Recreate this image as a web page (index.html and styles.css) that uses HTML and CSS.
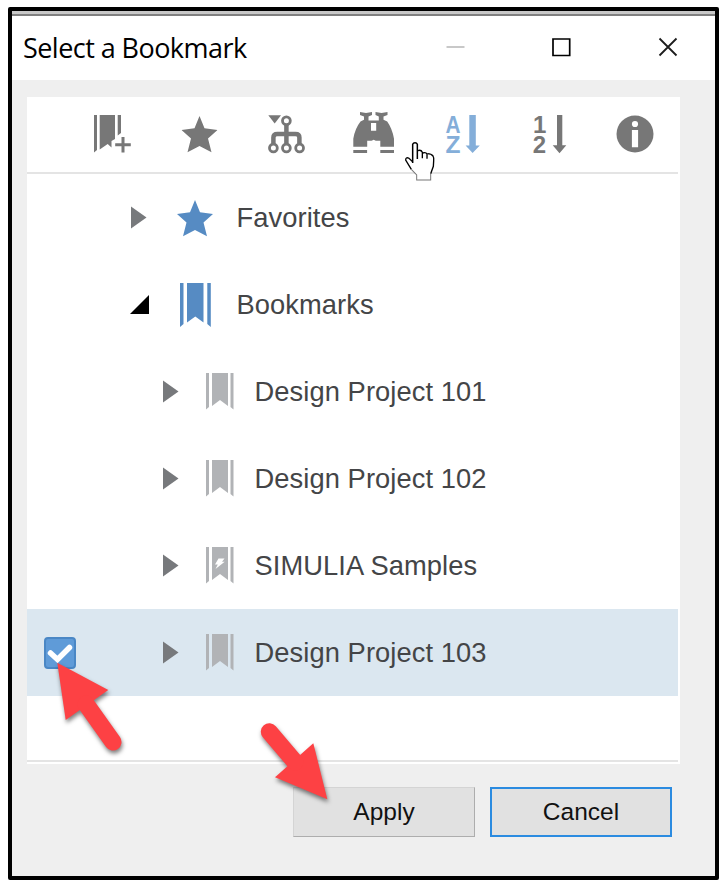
FILE: index.html
```
<!DOCTYPE html>
<html lang="en">
<head>
    <meta charset="UTF-8">
    <meta name="viewport" content="width=device-width, initial-scale=1.0">
    <title>Select a Bookmark</title>
    <link rel="stylesheet" href="styles.css">
</head>
<body>
    <svg class="symbols" width="0" height="0">
        <symbol id="ribbon" viewBox="0 0 28 37">
            <path d="M0 0h3v34L0 36.5zM6 0h16v33l-8-6-8 6zM24.5 0h3v36.5l-3-2.5z"/>
        </symbol>
        <symbol id="star" viewBox="0 0 36 37">
            <path d="M18 0l5 12.2 13 1.8-9.5 8.6L30 36.3l-12-6.4-12 6.4 3.5-13.7L0 14l13-1.8z"/>
        </symbol>
        <symbol id="arrow-right" viewBox="0 0 16 23">
            <path d="M0 .5l15.5 11L0 22.5z"/>
        </symbol>
    </svg>

    <div class="window">
        <header class="title-bar">
            <h1 class="title">Select a Bookmark</h1>
            <div class="window-controls">
                <svg width="20" height="20" viewBox="0 0 20 20"><path d="M.5 10h18" stroke="#c8c8c8" stroke-width="2"/></svg>
                <svg width="20" height="20" viewBox="0 0 20 20"><path d="M1 2h16.700v16.500H1z" fill="none" stroke="#000" stroke-width="1.700"/></svg>
                <svg width="20" height="20" viewBox="0 0 20 20"><path d="M1.500 1.500l17 17M18.500 1.500l-17 17" stroke="#1c1c1c" stroke-width="1.800"/></svg>
            </div>
        </header>

        <main class="content">
            <div class="panel">
                <div class="toolbar">
                    <button class="tool" aria-label="Add bookmark">
                        <svg viewBox="0 0 45 45">
                            <path d="M5 3h3v35l-3 2.500zM10.700 3H26v24l-3.500 2v6.500L18.700 32l-8 5.500zM28.700 3H32v18l-3.300 2.500zM32.500 25h3v6.200h6.300v3h-6.300v6.300h-3v-6.300h-6.300v-3h6.300z"/>
                        </svg>
                    </button>
                    <button class="tool" aria-label="Favorites">
                        <svg viewBox="0 0 45 45"><use href="#star" x="5.5" y="4" width="36" height="37"/></svg>
                    </button>
                    <button class="tool" aria-label="Tree">
                        <svg viewBox="0 0 45 45">
                            <path d="M5.300 3.200H18l-6.300 8.200z"/>
                            <g fill="none" stroke="currentColor">
                                <path d="M23.400 12.500v18.700M10.400 31.500v-6q0-3.600 4-3.600h18q4 0 4 3.600v6" stroke-width="4.500"/>
                                <g stroke-width="2.800">
                                    <circle cx="23.400" cy="8.700" r="3.900"/>
                                    <circle cx="10.400" cy="35.900" r="3.900"/>
                                    <circle cx="23.400" cy="35.900" r="3.900"/>
                                    <circle cx="36.600" cy="35.900" r="3.900"/>
                                </g>
                            </g>
                        </svg>
                    </button>
                    <button class="tool" aria-label="Find">
                        <svg viewBox="0 0 45 45">
                            <path fill-rule="evenodd" d="M10 0l6 1 6-1v3l-3.500 1.500V8.500h10.300V4.500L25.500 3V0l6 1 6-1v3l-4 1.500v3.300l3.700 1.700q5 7 6.800 17.200v8H30.300v-6h-4.500l-2.100-1-2.200 1h-4.300v6H3.300v-8Q5 16.500 10.500 9.500L14 7.800V4.500L10 3zM21 11v7.700h5.200V11zM3.300 38h13.800v3H3.300zM30.300 38H44v3H30.300z"/>
                        </svg>
                    </button>
                    <button class="tool tool-active" aria-label="Sort by name">
                        <svg viewBox="0 0 45 45">
                            <text x="8.500" y="20.500" textLength="15" lengthAdjust="spacingAndGlyphs">A</text>
                            <text x="8.500" y="41" textLength="15" lengthAdjust="spacingAndGlyphs">Z</text>
                            <path d="M32.300 3h6.500v30.500h4L35.600 41l-7-7.500h3.700z"/>
                        </svg>
                    </button>
                    <button class="tool" aria-label="Sort by number">
                        <svg viewBox="0 0 45 45">
                            <text x="9" y="20.500">1</text>
                            <text x="8.700" y="41">2</text>
                            <path d="M33 3h5.300v30.300h4l-6.800 8-6.800-8H33z"/>
                        </svg>
                    </button>
                    <button class="tool" aria-label="Information">
                        <svg viewBox="0 0 45 45">
                            <circle cx="24" cy="22" r="18.500"/>
                            <path d="M20.900 18h6.200v17.300h-6.200z" fill="#fff"/>
                            <circle cx="24" cy="12" r="3.100" fill="#fff"/>
                        </svg>
                    </button>
                </div>

                <ul class="tree">
                    <li class="row">
                        <svg class="toggle"><use href="#arrow-right"/></svg>
                        <svg class="icon icon-star"><use href="#star"/></svg>
                        <span>Favorites</span>
                    </li>
                    <li class="row">
                        <svg class="toggle toggle-open" viewBox="0 0 19 19"><path d="M0 19L19 0v19z"/></svg>
                        <svg class="icon icon-bookmarks" viewBox="0 0 31 44">
                            <path d="M0 0h3.500v41L0 44zM7 0h16.500v39.500l-8.200-6-8.300 6zM27.300 0h3.500v44l-3.500-3z"/>
                        </svg>
                        <span>Bookmarks</span>
                    </li>
                    <li class="row child">
                        <svg class="toggle"><use href="#arrow-right"/></svg>
                        <svg class="icon"><use href="#ribbon"/></svg>
                        <span>Design Project 101</span>
                    </li>
                    <li class="row child">
                        <svg class="toggle"><use href="#arrow-right"/></svg>
                        <svg class="icon"><use href="#ribbon"/></svg>
                        <span>Design Project 102</span>
                    </li>
                    <li class="row child">
                        <svg class="toggle"><use href="#arrow-right"/></svg>
                        <svg class="icon" viewBox="0 0 28 37">
                            <use href="#ribbon"/>
                            <path d="M12.500 11.500h6l-2.500 3.200h2.700L9.500 22l2.300-4.400H9z" fill="#fff"/>
                        </svg>
                        <span>SIMULIA Samples</span>
                    </li>
                    <li class="row child selected">
                        <span class="checkbox" role="checkbox" aria-checked="true">
                            <svg width="28" height="28" viewBox="0 0 28 28"><path d="M4.500 14l7 6.500L23.500 8.500" fill="none" stroke="#fff" stroke-width="5.500" stroke-linecap="round"/></svg>
                        </span>
                        <svg class="toggle"><use href="#arrow-right"/></svg>
                        <svg class="icon"><use href="#ribbon"/></svg>
                        <span>Design Project 103</span>
                    </li>
                </ul>
            </div>

            <div class="actions">
                <button class="btn">Apply</button>
                <button class="btn btn-focus">Cancel</button>
            </div>
        </main>
    </div>

    <!-- mouse pointer -->
    <svg class="pointer" viewBox="0 110 110 140">
        <path d="M38 184V132q2-5 7-5t7 5v19q8-4 15 5 8-3 13 4 8-1 16 5 6 4 5 14l-1 18-9 23v19H50v-17L35 207 17 180q-1-7 6-7z" fill="#fff"/>
        <g fill="none" stroke="#000">
            <path d="M38 188V132q2-5 7-5t7 5v44" stroke-width="4.500"/>
            <path d="M53 151q10-4 14 5v18M68 158q10-3 13 3v14M38 184l-12-11q-9-3-9 6l17 28" stroke-width="4"/>
            <path d="M82 160q12 0 17 7 3 5 2 14l-1 17-8 22" stroke-width="4"/>
            <path d="M34 207l16 17v15h42v-19" stroke="#777" stroke-width="3"/>
        </g>
    </svg>

    <!-- callout arrows -->
    <svg class="callouts" width="723" height="887" viewBox="0 0 723 887">
        <g class="callout">
            <path d="M57.300 662.700L108.300 690 65.700 720z"/>
            <path class="shaft" d="M86 704l27 38"/>
        </g>
        <g class="callout">
            <path d="M327.300 799.300L275 777.300 313.300 743.300z"/>
            <path class="shaft" d="M269.300 731.700L295 762"/>
        </g>
    </svg>
</body>
</html>
```
FILE: styles.css
```
* {
    margin: 0;
    padding: 0;
    box-sizing: border-box;
}

body {
    height: 887px;
    padding: 7px 4px 7px 8px;
    background: #fff;
    font-family: "Liberation Sans", Arial, sans-serif;
    overflow: hidden;
}

svg {
    display: block;
    fill: currentColor;
}

.symbols {
    position: absolute;
}

.window {
    width: 711px;
    height: 873px;
    display: flex;
    flex-direction: column;
    border: 4px solid #000;
    border-radius: 2px;
    background: #efefef;
}

.title-bar {
    height: 69px;
    display: flex;
    align-items: center;
    justify-content: space-between;
    padding: 0 37px 0 11px;
    background: linear-gradient(#c8c8c8 3px, #808080 3px, #808080 5px, #fff 5px);
}

.title {
    font-family: "Open Sans", "Noto Sans", sans-serif;
    font-size: 27px;
    font-weight: 400;
    line-height: 36px;
    letter-spacing: -0.550px;
    padding-top: 4px;
    color: #000;
}

.window-controls {
    display: flex;
    gap: 86px;
    padding-top: 3px;
}

.content {
    flex: 1;
    padding: 17px 35px 0 15px;
}

.panel {
    height: 667px;
    background: #fff;
}

.toolbar {
    width: 651px;
    height: 77px;
    display: flex;
    padding-left: 41px;
    border-bottom: 2px solid #e4e4e4;
}

.tool {
    width: 87px;
    height: 75px;
    padding: 15px 21px;
    border: none;
    background: none;
    color: #777;
}

.tool svg {
    width: 45px;
    height: 45px;
    overflow: visible;
}

.tool text {
    font-family: "Liberation Sans", Arial, sans-serif;
    font-size: 24px;
    font-weight: 700;
}

.tool-active {
    color: #84aed9;
}

.tree {
    width: 651px;
    height: 588px;
    list-style: none;
    border-bottom: 2px solid #e4e4e4;
}

.row {
    position: relative;
    height: 87px;
    display: flex;
    align-items: center;
    padding-left: 104px;
    font-size: 27.3px;
    letter-spacing: 0.080px;
    color: #444547;
    white-space: nowrap;
}

.child {
    padding-left: 136px;
}

.selected {
    background: #dbe7f0;
}

.toggle {
    width: 16px;
    height: 23px;
    color: #77797c;
}

.toggle-open {
    width: 19px;
    height: 19px;
    margin: 0 -2px 0 -1px;
    color: #000;
}

.icon {
    width: 28px;
    height: 37px;
    margin: 0 20.500px 0 27px;
    color: #b1b3b6;
}

.icon-star {
    width: 36px;
    height: 37px;
    margin: 1px 23.500px 0 30px;
    color: #568bc3;
}

.icon-bookmarks {
    width: 31px;
    height: 44px;
    margin: 0 26px 0 32.500px;
    color: #568bc3;
}

.checkbox {
    position: absolute;
    left: 17px;
    top: 28px;
    width: 32px;
    height: 32px;
    border: 2px solid #4a87c5;
    border-radius: 4px;
    background: #5f9bd8;
}

.actions {
    display: flex;
    justify-content: flex-end;
    gap: 15px;
    padding: 23px 8px 0 0;
}

.btn {
    width: 182px;
    height: 50px;
    border: 1px solid #d4d4d4;
    border-right-color: #adadad;
    border-bottom-color: #adadad;
    background: #e1e1e1;
    font-family: inherit;
    font-size: 24.5px;
    color: #111;
}

.btn-focus {
    border: 2px solid #2b8be0;
}

.pointer {
    position: absolute;
    left: 400px;
    top: 137px;
    width: 36.7px;
    height: 46.7px;
}

.callouts {
    position: absolute;
    left: 0;
    top: 0;
    pointer-events: none;
}

.callout {
    fill: #fd4144;
    filter: drop-shadow(1px 3px 2px rgba(0, 0, 0, 0.5));
}

.shaft {
    stroke: #fd4144;
    stroke-width: 17px;
    stroke-linecap: round;
}
```
